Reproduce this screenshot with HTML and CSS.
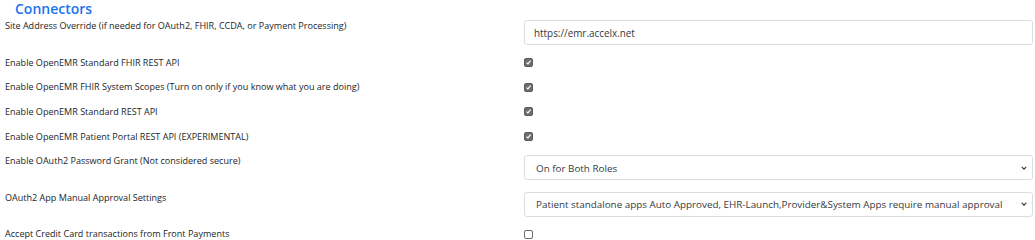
FILE: index.html
```html
<!DOCTYPE html>
<html>
<head>
<meta charset="utf-8">
<link rel="stylesheet" href="styles.css">
</head>
<body>
<div class="page">
  <h3 class="section-title">Connectors</h3>
  <div class="rows">
    <div class="row tall">
      <label class="label">Site Address Override (if needed for OAuth2, FHIR, CCDA, or Payment Processing)</label>
      <div class="control"><input class="text-input" type="text" value="https://emr.accelx.net"></div>
    </div>
    <div class="row check">
      <label class="label">Enable OpenEMR Standard FHIR REST API</label>
      <div class="control"><input class="cb" type="checkbox" checked></div>
    </div>
    <div class="row check">
      <label class="label">Enable OpenEMR FHIR System Scopes (Turn on only if you know what you are doing)</label>
      <div class="control"><input class="cb" type="checkbox" checked></div>
    </div>
    <div class="row check">
      <label class="label">Enable OpenEMR Standard REST API</label>
      <div class="control"><input class="cb" type="checkbox" checked></div>
    </div>
    <div class="row check">
      <label class="label">Enable OpenEMR Patient Portal REST API (EXPERIMENTAL)</label>
      <div class="control"><input class="cb" type="checkbox" checked></div>
    </div>
    <div class="row tall">
      <label class="label">Enable OAuth2 Password Grant (Not considered secure)</label>
      <div class="control">
        <div class="select">
          <span class="select-text">On for Both Roles</span>
          <svg class="chev" viewBox="0 0 8 5" width="6" height="4"><path d="M1 1 L4 4 L7 1" fill="none" stroke="#333" stroke-width="1.5"/></svg>
        </div>
      </div>
    </div>
    <div class="row tall">
      <label class="label">OAuth2 App Manual Approval Settings</label>
      <div class="control">
        <div class="select">
          <span class="select-text">Patient standalone apps Auto Approved, EHR-Launch,Provider&amp;System Apps require manual approval</span>
          <svg class="chev" viewBox="0 0 8 5" width="6" height="4"><path d="M1 1 L4 4 L7 1" fill="none" stroke="#333" stroke-width="1.5"/></svg>
        </div>
      </div>
    </div>
    <div class="row check">
      <label class="label">Accept Credit Card transactions from Front Payments</label>
      <div class="control"><input class="cb" type="checkbox"></div>
    </div>
  </div>
</div>
</body>
</html>
```
FILE: styles.css
```css
* { box-sizing: border-box; }
html, body { margin: 0; padding: 0; background: #fff; }
body {
  font-family: "Open Sans", "Noto Sans", sans-serif;
  color: #212529;
}
.page { padding: 0 2px 0 5px; }
.section-title {
  margin: 0 0 0 10px;
  font-size: 14px;
  line-height: 18px;
  font-weight: 600;
  color: #1a73f0;
  height: 20px;
}
.rows {
  display: flex;
  flex-direction: column;
  gap: 11.5px;
}
.row {
  display: grid;
  grid-template-columns: 519px 1fr;
  align-items: start;
}
.row.check { height: 13.2px; }
.row.tall { height: 25px; }
.label {
  font-size: 9.05px;
  line-height: 12px;
  white-space: nowrap;
  color: #212529;
}
.control { display: flex; align-items: center; }
.text-input, .select {
  width: 509px;
  height: 25px;
  border: 1px solid #dadde0;
  border-radius: 3px;
  font-family: "Open Sans", "Noto Sans", sans-serif;
  font-size: 9.9px;
  color: #353a40;
  padding: 0 9px;
  background: #fff;
}
.text-input { outline: none; }
.select {
  display: flex;
  align-items: center;
  justify-content: space-between;
  padding: 0 5px 0 11px;
  overflow: hidden;
}
.select-text { white-space: nowrap; font-size: 9.85px; }
.chev { flex: none; }
.cb {
  appearance: none;
  -webkit-appearance: none;
  margin: 0;
  width: 9px;
  height: 9px;
  margin-top: 1.5px;
  border: 1px solid #6b6b6b;
  border-radius: 2px;
  background: #fff;
}
.cb:checked {
  border-color: #5a5a5a;
  background: #6e6e6e url("data:image/svg+xml;utf8,<svg xmlns='http://www.w3.org/2000/svg' viewBox='0 0 9 9'><path d='M2 4.6 L3.8 6.4 L7.2 2.2' fill='none' stroke='white' stroke-width='1.5'/></svg>") center/100% no-repeat;
}
```
